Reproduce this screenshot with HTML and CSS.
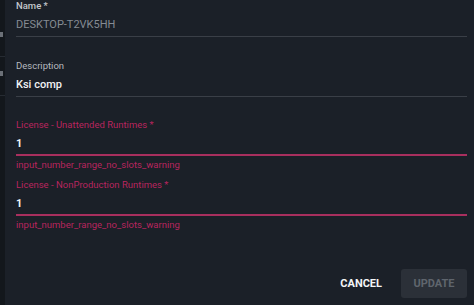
FILE: index.html
```html
<!DOCTYPE html>
<html>
<head>
<meta charset="utf-8">
<link rel="stylesheet" href="styles.css">
</head>
<body>
<div class="backdrop">
  <span class="mark mark-a"></span>
  <span class="rule rule-a"></span>
  <span class="mark mark-b"></span>
  <span class="rule rule-b"></span>
</div>
<div class="dialog">
  <div class="fields">
    <div class="field">
      <div class="label">Name *</div>
      <div class="input disabled">DESKTOP-T2VK5HH</div>
    </div>
    <div class="field">
      <div class="label label-plain">Description</div>
      <div class="input">Ksi comp</div>
    </div>
    <div class="field error">
      <div class="label">License - Unattended Runtimes *</div>
      <div class="input number">1</div>
      <div class="helper">input_number_range_no_slots_warning</div>
    </div>
    <div class="field error">
      <div class="label">License - NonProduction Runtimes *</div>
      <div class="input number">1</div>
      <div class="helper">input_number_range_no_slots_warning</div>
    </div>
  </div>
  <div class="actions">
    <button class="btn btn-text">CANCEL</button>
    <button class="btn btn-filled" disabled>UPDATE</button>
  </div>
</div>
</body>
</html>
```
FILE: styles.css
```css
html, body {
  margin: 0;
  padding: 0;
  height: 100%;
}
body {
  display: flex;
  background: #1b2028;
  font-family: Roboto, "Liberation Sans", sans-serif;
  overflow: hidden;
}
.backdrop {
  width: 5px;
  flex: none;
  background: #13171c;
  display: flex;
  flex-direction: column;
}
.mark {
  display: block;
  width: 3px;
  height: 5px;
  background: #6b7077;
}
.mark-a { margin-top: 32px; }
.mark-b { margin-top: 14px; }
.rule {
  display: block;
  height: 1px;
  background: #262b32;
}
.rule-a { margin-top: 19px; }
.rule-b { margin-top: 19px; }
.dialog {
  flex: 1;
  display: flex;
  flex-direction: column;
  padding: 0 7px 7px 11px;
  height: 305px;
  box-sizing: border-box;
}
.fields {
  display: flex;
  flex-direction: column;
}
.field {
  height: 59.5px;
  display: flex;
  flex-direction: column;
}
.label {
  font-size: 9.5px;
  line-height: 12px;
  height: 12px;
  font-weight: 500;
  color: #c3c7cc;
}
.label-plain {
  font-weight: 400;
  color: #b5b9bf;
}
.input {
  font-size: 11px;
  line-height: 16px;
  padding: 5px 0 3px;
  font-weight: 500;
  color: #f2f3f5;
  border-bottom: 1px solid #3a3f47;
}
.input.disabled {
  color: #858b93;
  font-weight: 400;
}
.input.number {
  font-weight: 700;
}
.error .label {
  color: #b8255e;
  font-weight: 400;
}
.error .input {
  padding-bottom: 2px;
  border-bottom: 2px solid #a82f5e;
}
.helper {
  margin-top: 2px;
  font-size: 9.5px;
  line-height: 14px;
  color: #b8255e;
}
.actions {
  margin-top: auto;
  display: flex;
  justify-content: flex-end;
  align-items: center;
  gap: 11px;
}
.btn {
  font-family: Roboto, "Liberation Sans", sans-serif;
  font-size: 11px;
  font-weight: 700;
  border: none;
  border-radius: 3px;
  height: 29px;
  padding: 0 8px;
  cursor: pointer;
}
.btn-text {
  background: transparent;
  color: #f4f5f6;
}
.btn-filled {
  width: 66px;
  background: #2b3038;
  color: #5f656d;
}
```
